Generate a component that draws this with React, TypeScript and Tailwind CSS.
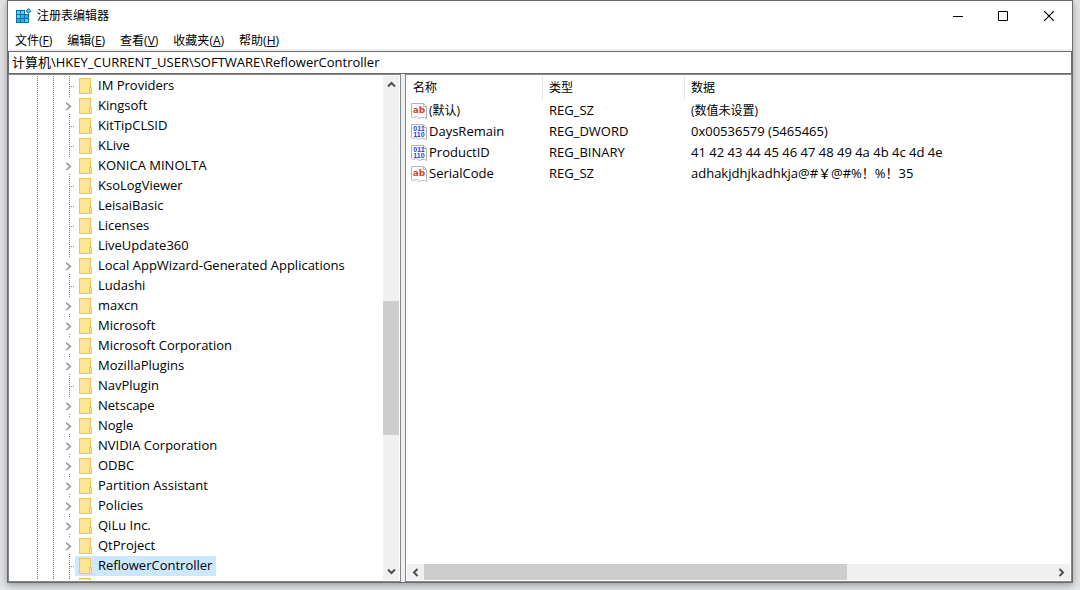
import { useState } from 'react'

interface TreeKey {
  name: string
  expandable?: boolean
}

interface RegistryValue {
  name: string
  type: string
  data: string
  kind: 'string' | 'binary'
}

const menus = [
  { label: '文件', hotkey: 'F' },
  { label: '编辑', hotkey: 'E' },
  { label: '查看', hotkey: 'V' },
  { label: '收藏夹', hotkey: 'A' },
  { label: '帮助', hotkey: 'H' },
]

const keys: TreeKey[] = [
  { name: 'IM Providers' },
  { name: 'Kingsoft', expandable: true },
  { name: 'KitTipCLSID' },
  { name: 'KLive' },
  { name: 'KONICA MINOLTA', expandable: true },
  { name: 'KsoLogViewer' },
  { name: 'LeisaiBasic' },
  { name: 'Licenses' },
  { name: 'LiveUpdate360' },
  { name: 'Local AppWizard-Generated Applications', expandable: true },
  { name: 'Ludashi' },
  { name: 'maxcn', expandable: true },
  { name: 'Microsoft', expandable: true },
  { name: 'Microsoft Corporation', expandable: true },
  { name: 'MozillaPlugins', expandable: true },
  { name: 'NavPlugin' },
  { name: 'Netscape', expandable: true },
  { name: 'Nogle', expandable: true },
  { name: 'NVIDIA Corporation', expandable: true },
  { name: 'ODBC', expandable: true },
  { name: 'Partition Assistant', expandable: true },
  { name: 'Policies', expandable: true },
  { name: 'QiLu Inc.', expandable: true },
  { name: 'QtProject', expandable: true },
  { name: 'ReflowerController' },
]

const values: RegistryValue[] = [
  { name: '(默认)', type: 'REG_SZ', data: '(数值未设置)', kind: 'string' },
  { name: 'DaysRemain', type: 'REG_DWORD', data: '0x00536579 (5465465)', kind: 'binary' },
  { name: 'ProductID', type: 'REG_BINARY', data: '41 42 43 44 45 46 47 48 49 4a 4b 4c 4d 4e', kind: 'binary' },
  { name: 'SerialCode', type: 'REG_SZ', data: 'adhakjdhjkadhkja@#￥@#%！%！35', kind: 'string' },
]

// Chinese labels are set one size below the Latin ones
const textSize = (text: string) => (/[\u4e00-\u9fff]/.test(text) ? 'text-xs' : 'text-[13px] pb-[2px]')

function AppIcon() {
  return (
    <svg width="16" height="16" viewBox="0 0 16 16" className="shrink-0">
      <path d="M0 2h9v4h4v9H0z" fill="#0a72a8" />
      <path d="M1 3h3v3H1zM5 3h3v3H5zM1 7h3v3H1z" fill="#5fd0fa" />
      <path d="M5 7h3v3H5zM9 7h3v3H9zM1 11h3v3H1zM5 11h3v3H5z" fill="#25b4ee" />
      <path d="M9 11h3v3H9z" fill="#5fd0fa" />
      <path d="M12.500 0l3 3-3 3-3-3z" fill="#1b86b8" />
      <path d="M12.500 1.500l1.500 1.500-1.500 1.500-1.500-1.500z" fill="#6cc6ec" />
    </svg>
  )
}

function FolderIcon() {
  return (
    <svg width="13" height="16" viewBox="0 0 13 16" shapeRendering="crispEdges" className="shrink-0">
      <path d="M0 0h12v9h1v7H0z" fill="#edc84f" />
      <path d="M1 1h10v8h-1v6H1z" fill="#ffe596" />
      <path d="M11 10h1v5h-1z" fill="#ffe596" />
    </svg>
  )
}

function ValueIcon({ kind }: { kind: RegistryValue['kind'] }) {
  return (
    <svg width="16" height="16" viewBox="0 0 16 16" className="shrink-0">
      <path d="M.5.5h12l3 3v12l-2-1-3 0-2 1-3-2-3 1-2-1z" fill="#fff" stroke="#b4b4b4" />
      <path d="M12.500.5v3h3" fill="none" stroke="#b4b4b4" />
      {kind === 'string' ? (
        <text x="8" y="10" textAnchor="middle" className="fill-[#d2492a] font-['DejaVu_Sans'] text-[9px] font-bold">ab</text>
      ) : (
        <g className="fill-[#2040e0] font-['Liberation_Sans'] text-[7px] font-bold">
          <text x="8" y="7" textAnchor="middle">011</text>
          <text x="8" y="13" textAnchor="middle">110</text>
        </g>
      )}
    </svg>
  )
}

function Arrow({ d }: { d: string }) {
  return (
    <svg width="9" height="9" viewBox="0 0 9 9" fill="none" stroke="#505050" strokeWidth="2">
      <path d={d} />
    </svg>
  )
}

function TreeRow({ item, selected, onSelect }: { item: TreeKey; selected: boolean; onSelect: () => void }) {
  return (
    <li className="flex h-5 items-center pl-6">
      <span className="flex h-5 w-[42px] shrink-0 items-center justify-end">
        {item.expandable ? (
          <span className="flex h-4 w-3 items-center bg-white pl-[2px]">
            <svg width="7" height="9" viewBox="0 0 7 9" fill="none" stroke="#a0a0a0" strokeWidth="1.800">
              <path d="M1.300.8L5.300 4.500 1.300 8.200" />
            </svg>
          </span>
        ) : (
          <span className="h-px w-[6px] bg-[repeating-linear-gradient(to_right,#808080_0_1px,transparent_1px_2px)]" />
        )}
      </span>
      <button
        type="button"
        onClick={onSelect}
        className={`flex h-5 items-center gap-[6px] whitespace-nowrap pl-1 pr-1 ${selected ? 'bg-[#cce8ff]' : ''}`}
      >
        <FolderIcon />
        <span className="pb-[2px]">{item.name}</span>
      </button>
    </li>
  )
}

export default function App() {
  const [selected, setSelected] = useState('ReflowerController')
  const [path, setPath] = useState('计算机\\HKEY_CURRENT_USER\\SOFTWARE\\ReflowerController')

  return (
    <div className="flex h-screen bg-[#e4e5e7] px-[7px] pb-[7px] font-['Open_Sans','Noto_Sans_CJK_SC',sans-serif] text-[13px] leading-[18px] text-black">
      <div className="flex min-w-0 flex-1 flex-col border border-[#6b6b6b] bg-white shadow-[0_2px_8px_rgba(0,0,0,0.35)]">
        <header className="flex h-[29px] shrink-0 items-center pl-2">
          <AppIcon />
          <h1 className="ml-[5px] flex-1 text-xs">注册表编辑器</h1>
          <button type="button" aria-label="最小化" className="flex h-full w-11 items-center justify-center">
            <svg width="10" height="10" shapeRendering="crispEdges"><path d="M0 5h10v1H0z" /></svg>
          </button>
          <button type="button" aria-label="最大化" className="flex h-full w-[46px] items-center justify-center">
            <svg width="10" height="10" fill="none" stroke="#000"><path d="M.5.5h9v9h-9z" /></svg>
          </button>
          <button type="button" aria-label="关闭" className="flex h-full w-[46px] items-center justify-center">
            <svg width="10" height="10" fill="none" stroke="#000" strokeWidth="1.200"><path d="M0 0l10 10M10 0L0 10" /></svg>
          </button>
        </header>

        <nav className="flex h-[21px] shrink-0 items-end gap-[15px] border-b-2 border-[#f0f0f0] pl-[7px] text-xs">
          {menus.map(menu => (
            <button key={menu.label} type="button" className="whitespace-nowrap leading-4">
              {menu.label}(<u className="underline-offset-1">{menu.hotkey}</u>)
            </button>
          ))}
        </nav>

        <input
          aria-label="地址"
          value={path}
          onChange={e => setPath(e.target.value)}
          className="h-[23px] w-full shrink-0 border border-[#6b6b6b] pb-[2px] pl-[3px] outline-none"
        />

        <main className="flex min-h-0 flex-1 bg-[#f0f0f0]">
          <section className="flex w-[393px] shrink-0 border border-[#828790] bg-white py-px pr-px">
            <div className="flex min-w-0 flex-1 overflow-hidden">
              <ul className="h-full min-w-0 flex-1 bg-[repeating-linear-gradient(to_bottom,transparent_0_1px,white_1px_2px),linear-gradient(to_right,transparent_28px,#808080_28px_29px,transparent_29px_44px,#808080_44px_45px,transparent_45px_60px,#808080_60px_61px,transparent_61px)]">
                {keys.map(item => (
                  <TreeRow
                    key={item.name}
                    item={item}
                    selected={item.name === selected}
                    onSelect={() => setSelected(item.name)}
                  />
                ))}
                <li className="pl-[70px] pt-[2px]"><FolderIcon /></li>
              </ul>
            </div>
            <div className="flex w-4 shrink-0 flex-col items-center bg-[#f0f0f0]">
              <button type="button" aria-label="向上滚动" className="flex h-[17px] items-center">
                <Arrow d="M1 6.500L4.500 3 8 6.500" />
              </button>
              <div className="flex w-full flex-1 flex-col">
                <div className="flex-[208]" />
                <div className="flex-[134] bg-[#cdcdcd]" />
                <div className="flex-[128]" />
              </div>
              <button type="button" aria-label="向下滚动" className="flex h-[17px] items-center">
                <Arrow d="M1 2.500L4.500 6 8 2.500" />
              </button>
            </div>
          </section>

          <section className="ml-1 flex min-w-0 flex-1 flex-col border border-[#828790] bg-white p-px">
            <div className="min-h-0 flex-1 overflow-hidden">
              <table className="w-full table-fixed border-separate border-spacing-0 text-left">
                <colgroup>
                  <col className="w-[136px]" />
                  <col className="w-[142px]" />
                  <col />
                </colgroup>
                <thead>
                  <tr className="h-6 text-xs">
                    <th className="border-r border-[#e5e5e5] p-0 pl-[6px] font-normal">名称</th>
                    <th className="border-r border-[#e5e5e5] p-0 pl-[6px] font-normal">类型</th>
                    <th className="p-0 pl-[6px] font-normal">数据</th>
                  </tr>
                </thead>
                <tbody>
                  {values.map(value => (
                    <tr key={value.name} className="h-[21px] whitespace-nowrap">
                      <td className="p-0 pl-1">
                        <span className="flex items-center gap-[2px]">
                          <ValueIcon kind={value.kind} />
                          <span className={textSize(value.name)}>{value.name}</span>
                        </span>
                      </td>
                      <td className="p-0 pb-[2px] pl-[6px]">{value.type}</td>
                      <td className={`p-0 pl-[6px] ${textSize(value.data)}`}>{value.data}</td>
                    </tr>
                  ))}
                </tbody>
              </table>
            </div>
            <div className="flex h-4 shrink-0 items-center bg-[#f0f0f0]">
              <button type="button" aria-label="向左滚动" className="flex w-[17px] justify-center">
                <Arrow d="M6.500 1L3 4.500 6.500 8" />
              </button>
              <div className="flex h-full flex-1">
                <div className="flex-[423] bg-[#cdcdcd]" />
                <div className="flex-[206]" />
              </div>
              <button type="button" aria-label="向右滚动" className="flex w-[17px] justify-center">
                <Arrow d="M2.500 1L6 4.500 2.500 8" />
              </button>
            </div>
          </section>
        </main>
      </div>
    </div>
  )
}
